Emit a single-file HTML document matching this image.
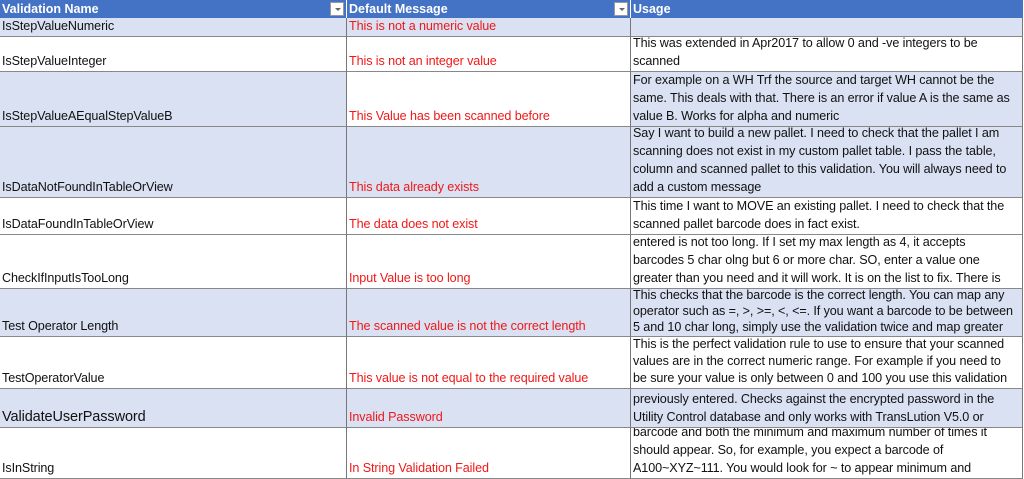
<!DOCTYPE html>
<html><head><meta charset="utf-8"><style>
*{margin:0;padding:0;box-sizing:border-box}
body{width:1024px;height:479px;overflow:hidden;background:#fff;font-family:"Liberation Sans",Arial,sans-serif;position:relative}
.c{position:absolute;overflow:hidden;display:flex;flex-direction:column;justify-content:flex-end;font-size:12.6px;letter-spacing:-0.1px;line-height:18px;padding:0 0 1px 2px;white-space:nowrap;color:#111;border-right:1px solid #777;border-bottom:1px solid #888}
.r{color:#f01818}
.b{background:#d9e1f2}
.h{position:absolute;top:0;height:18px;background:#4472c4;color:#fff;font-weight:bold;font-size:12.5px;line-height:18px;padding-left:2px;border-right:1px solid #fff}
.dd{position:absolute;top:2px;width:14px;height:14px;background:#fff;border:1px solid #999}
.dd:after{content:"";position:absolute;left:4px;top:5px;border-left:3px solid transparent;border-right:3px solid transparent;border-top:3px solid #666}
</style></head><body>
<div class="h" style="left:0;width:347px">Validation Name</div>
<div class="dd" style="left:330px"></div>
<div class="h" style="left:347px;width:284px">Default Message</div>
<div class="dd" style="left:614px"></div>
<div class="h" style="left:631px;width:393px">Usage</div>

<div class="c b" style="left:0;top:18px;width:347px;height:19px">IsStepValueNumeric</div>
<div class="c b r" style="left:347px;top:18px;width:284px;height:19px">This is not a numeric value</div>
<div class="c b" style="left:631px;top:18px;width:392px;height:19px"></div>

<div class="c" style="left:0;top:37px;width:347px;height:35px">IsStepValueInteger</div>
<div class="c r" style="left:347px;top:37px;width:284px;height:35px">This is not an integer value</div>
<div class="c" style="left:631px;top:37px;width:392px;height:35px"><div>This was extended in Apr2017 to allow 0 and -ve integers to be</div><div>scanned</div></div>

<div class="c b" style="left:0;top:72px;width:347px;height:55px">IsStepValueAEqualStepValueB</div>
<div class="c r" style="left:347px;top:72px;width:284px;height:55px">This Value has been scanned before</div>
<div class="c b" style="left:631px;top:72px;width:392px;height:55px"><div>For example on a WH Trf the source and target WH cannot be the</div><div>same. This deals with that. There is an error if value A is the same as</div><div>value B. Works for alpha and numeric</div></div>

<div class="c b" style="left:0;top:127px;width:347px;height:71px">IsDataNotFoundInTableOrView</div>
<div class="c b r" style="left:347px;top:127px;width:284px;height:71px">This data already exists</div>
<div class="c b" style="left:631px;top:127px;width:392px;height:71px"><div>Say I want to build a new pallet. I need to check that the pallet I am</div><div>scanning does not exist in my custom pallet table. I pass the table,</div><div>column and scanned pallet to this validation. You will always need to</div><div>add a custom message</div></div>

<div class="c" style="left:0;top:198px;width:347px;height:37px">IsDataFoundInTableOrView</div>
<div class="c r" style="left:347px;top:198px;width:284px;height:37px">The data does not exist</div>
<div class="c" style="left:631px;top:198px;width:392px;height:37px"><div>This time I want to MOVE an existing pallet. I need to check that the</div><div>scanned pallet barcode does in fact exist.</div></div>

<div class="c" style="left:0;top:235px;width:347px;height:54px">CheckIfInputIsTooLong</div>
<div class="c r" style="left:347px;top:235px;width:284px;height:54px">Input Value is too long</div>
<div class="c" style="left:631px;top:235px;width:392px;height:54px"><div>entered is not too long. If I set my max length as 4, it accepts</div><div>barcodes 5 char olng but 6 or more char. SO, enter a value one</div><div>greater than you need and it will work. It is on the list to fix. There is</div></div>

<div class="c b" style="left:0;top:289px;width:347px;height:48px">Test Operator Length</div>
<div class="c b r" style="left:347px;top:289px;width:284px;height:48px">The scanned value is not the correct length</div>
<div class="c b" style="left:631px;top:289px;width:392px;height:48px;line-height:16px"><div>This checks that the barcode is the correct length. You can map any</div><div>operator such as =, &gt;, &gt;=, &lt;, &lt;=. If you want a barcode to be between</div><div>5 and 10 char long, simply use the validation twice and map greater</div></div>

<div class="c" style="left:0;top:337px;width:347px;height:52px">TestOperatorValue</div>
<div class="c r" style="left:347px;top:337px;width:284px;height:52px">This value is not equal to the required value</div>
<div class="c" style="left:631px;top:337px;width:392px;height:52px;line-height:17px"><div>This is the perfect validation rule to use to ensure that your scanned</div><div>values are in the correct numeric range. For example if you need to</div><div>be sure your value is only between 0 and 100 you use this validation</div></div>

<div class="c b" style="left:0;top:389px;width:347px;height:39px;font-size:14.5px">ValidateUserPassword</div>
<div class="c b r" style="left:347px;top:389px;width:284px;height:39px">Invalid Password</div>
<div class="c b" style="left:631px;top:389px;width:392px;height:39px"><div>previously entered. Checks against the encrypted password in the</div><div>Utility Control database and only works with TransLution V5.0 or</div></div>

<div class="c" style="left:0;top:428px;width:347px;height:51px">IsInString</div>
<div class="c r" style="left:347px;top:428px;width:284px;height:51px">In String Validation Failed</div>
<div class="c" style="left:631px;top:428px;width:392px;height:51px"><div>barcode and both the minimum and maximum number of times it</div><div>should appear. So, for example, you expect a barcode of</div><div>A100~XYZ~111. You would look for ~ to appear minimum and</div></div>
</body></html>
